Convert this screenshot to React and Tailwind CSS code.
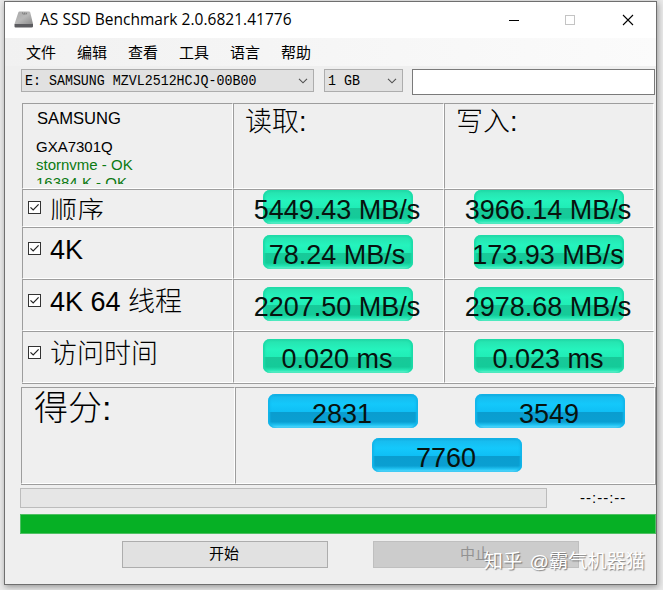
import clsx from "clsx";

const menuItems = ["文件", "编辑", "查看", "工具", "语言", "帮助"];

const tests = [
  { label: "顺序", read: "5449.43 MB/s", write: "3966.14 MB/s", compact: true },
  { label: "4K", read: "78.24 MB/s", write: "173.93 MB/s" },
  { label: "4K 64 线程", read: "2207.50 MB/s", write: "2978.68 MB/s" },
  { label: "访问时间", read: "0.020 ms", write: "0.023 ms" },
];

const cellClass = "border-t border-l border-t-[#9d9d9d] border-l-[#9d9d9d] border-r border-b border-r-white border-b-white";

function DriveIcon() {
  return (
    <svg width="20" height="18" viewBox="0 0 20 18">
      <defs>
        <linearGradient id="drive" x1="0" y1="0" x2="1" y2="1">
          <stop offset="0" stopColor="#a8a8a8" />
          <stop offset="0.5" stopColor="#b8b8b8" />
          <stop offset="1" stopColor="#8c8c8c" />
        </linearGradient>
      </defs>
      <path d="M5.5 0.5 H15 Q16 0.5 16.3 1.5 L19 13 H0.5 L4.3 1.5 Q4.6 0.5 5.5 0.5 Z" fill="url(#drive)" />
      <path d="M0.5 13 H19 V15.5 Q19 16.5 17.5 16.5 H1.5 Q0.5 16.5 0.5 15.5 Z" fill="#5c5c60" />
      <path d="M8.5 1.5 L9.3 3.5 M10.8 1.5 L10.6 3.5 M12.5 1.8 L12 3.5" stroke="#666" strokeWidth="0.8" />
    </svg>
  );
}

function Chevron() {
  return (
    <svg width="10" height="6" viewBox="0 0 10 6" fill="none" stroke="#505050" strokeWidth="1.1">
      <path d="M1 0.8 L5 4.8 L9 0.8" />
    </svg>
  );
}

function TitleBar() {
  return (
    <div className="flex h-9 items-center bg-white pl-[9px]">
      <DriveIcon />
      <h1 className="ml-[6px] flex-1 font-['Open_Sans','Noto_Sans',sans-serif] text-[15.5px] tracking-[0.02px] whitespace-nowrap text-black">
        AS SSD Benchmark 2.0.6821.41776
      </h1>
      <svg width="125" height="12" viewBox="0 0 125 12" fill="none" className="mr-[22px]">
        <path d="M0 6.5 H10" stroke="#000" />
        <rect x="56.5" y="1.5" width="9" height="9" stroke="#c4c4c4" />
        <path d="M114 1 L124 11 M124 1 L114 11" stroke="#000" strokeWidth="1.1" />
      </svg>
    </div>
  );
}

function Select({ value, className }) {
  return (
    <div
      className={clsx(
        "flex h-[23px] items-center justify-between border border-[#adadad] bg-[#e1e1e1] pr-[5px] pl-[3px] font-['Liberation_Mono',monospace] text-[13.3px] whitespace-pre text-black",
        className
      )}
    >
      <span className="inline-block translate-y-px scale-y-115">{value}</span>
      <Chevron />
    </div>
  );
}

function Checkbox() {
  return (
    <svg width="13" height="13" viewBox="0 0 13 13" fill="none" className="shrink-0">
      <rect x="0.5" y="0.5" width="12" height="12" fill="#fff" stroke="#333" />
      <path d="M2.5 6.3 L5.2 9 L10.6 3.4" stroke="#222" strokeWidth="1.2" />
    </svg>
  );
}

function Pill({ children, blue = false }) {
  return (
    <div
      className={clsx(
        "flex h-[34px] w-[150px] shrink-0 justify-center rounded-[7px] pr-[2px] text-[27px] leading-[40px] whitespace-nowrap text-[#07130f]",
        blue
          ? "bg-[linear-gradient(180deg,#12a9dc_0%,#17bdf0_10%,#14c8fb_30%,#0fbff5_52%,#0a9dcf_54%,#0a9fd2_82%,#22c6f5_92%,#7fe4ff_100%)] shadow-[inset_2px_0_2px_#12b6ea,inset_-2px_0_2px_#12b6ea]"
          : "bg-[linear-gradient(180deg,#22d9a5_0%,#26e6b2_10%,#25f3bd_30%,#20eeb7_52%,#18c999_54%,#14cb99_82%,#24e8b4_92%,#8bf8da_100%)] shadow-[inset_2px_0_2px_#1cdba8,inset_-2px_0_2px_#1cdba8]"
      )}
    >
      {children}
    </div>
  );
}

function DeviceInfo() {
  return (
    <div className={cellClass}>
      <div className="h-[80px] overflow-hidden pl-[13px] text-[15px] leading-[18px]">
        <p className="pt-[5px] pl-px text-[16.6px] leading-[19px]">SAMSUNG</p>
        <p className="pt-[10px]">GXA7301Q</p>
        <p className="text-[#0b7a12]">stornvme - OK</p>
        <p className="text-[#0b7a12]">16384 K - OK</p>
      </div>
    </div>
  );
}

function TestRow({ test }) {
  const pillCell = clsx(cellClass, "pl-[29px]", !test.compact && "pt-[7px]");
  return (
    <>
      <div className={clsx(cellClass, "flex items-start pl-[5px]")}>
        <div className={test.compact ? "pt-[11px]" : "pt-[14px]"}>
          <Checkbox />
        </div>
        <div
          className={clsx(
            "ml-[9px] overflow-hidden pt-[6px] text-[27px] leading-[32px] font-light whitespace-nowrap",
            test.compact ? "h-[30px]" : "h-[46px]"
          )}
        >
          {test.label}
        </div>
      </div>
      <div className={pillCell}>
        <Pill>{test.read}</Pill>
      </div>
      <div className={pillCell}>
        <Pill>{test.write}</Pill>
      </div>
    </>
  );
}

export default function App() {
  return (
    <div className="h-[590px] w-[663px] overflow-hidden bg-[#e9e9e9] pt-px pl-1 font-['Liberation_Sans','Noto_Sans_CJK_SC',sans-serif] text-black">
      <div className="relative h-[584px] w-[653px] border border-[#6f6f6f] bg-[#efefef] shadow-[1px_2px_6px_rgba(0,0,0,0.35)]">
        <TitleBar />

        <nav className="flex h-7 items-center gap-[21px] bg-gradient-to-r from-[#f1f1f1] to-[#fbfbfb] pt-[2px] pl-[21px] text-[15px]">
          {menuItems.map((item) => (
            <span key={item}>{item}</span>
          ))}
        </nav>

        <div className="flex items-start pt-[3px] pl-4">
          <Select value="E: SAMSUNG MZVL2512HCJQ-00B00" className="w-[293px]" />
          <Select value="1 GB" className="ml-[10px] w-[79px]" />
          <div className="ml-[9px] h-[26px] w-[243px] border border-[#7a7a7a] bg-white" />
        </div>

        <div className="mt-[8px] ml-[17px] grid w-[632px] grid-cols-[211px_211px_210px] grid-rows-[86px_38px_52px_52px_52px] border-b border-[#9d9d9d]">
          <DeviceInfo />
          <div className={clsx(cellClass, "pl-[11px] text-[27px] leading-[36px] font-light")}>读取:</div>
          <div className={clsx(cellClass, "pl-[11px] text-[27px] leading-[36px] font-light")}>写入:</div>
          {tests.map((test) => (
            <TestRow key={test.label} test={test} />
          ))}
        </div>

        <div className="mt-[3px] ml-4 grid h-[98px] w-[635px] grid-cols-[214px_420px] border-r border-b border-[#9d9d9d]">
          <div className={clsx(cellClass, "pl-[12px] text-[34px] leading-[41px] font-light")}>得分:</div>
          <div className={clsx(cellClass, "pt-[6px]")}>
            <div className="flex gap-[57px] pl-8">
              <Pill blue>2831</Pill>
              <Pill blue>3549</Pill>
            </div>
            <div className="mt-[10px] pl-[136px]">
              <Pill blue>7760</Pill>
            </div>
          </div>
        </div>

        <div className="mt-[3px] ml-[15px] flex h-5 items-center">
          <div className="h-5 w-[527px] border border-[#bcbcbc] bg-[#e6e6e6]" />
          <span className="ml-[33px] text-[15px] tracking-[1px]">--:--:--</span>
        </div>

        <div className="mt-[6px] ml-[15px] h-5 w-[636px] border border-[#4fc063] bg-[#06b025]" />

        <div className="mt-[7px] ml-[117px] flex gap-[45px] text-[15px]">
          <button className="h-[27px] w-[206px] border border-[#adadad] bg-[#e1e1e1] pr-[2px]">开始</button>
          <button className="h-[27px] w-[206px] border border-[#bfbfbf] bg-[#cccccc] pr-[2px] text-[#929292]" disabled>
            中止
          </button>
        </div>

        <div className="absolute right-[11px] bottom-[8px] text-[19.2px] leading-7 whitespace-nowrap text-white [text-shadow:1px_1px_1px_rgba(0,0,0,0.45)]">
          知乎 <span className="ml-[2px]">@霸气机器猫</span>
        </div>
      </div>
    </div>
  );
}
